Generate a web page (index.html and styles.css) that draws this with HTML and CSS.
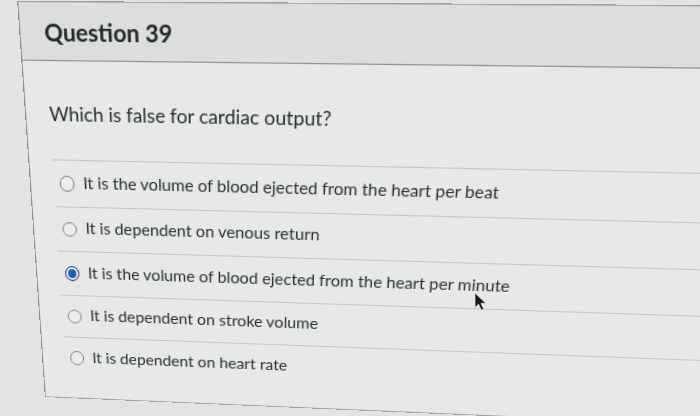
FILE: index.html
```html
<!DOCTYPE html>
<html lang="en">
<head>
<meta charset="utf-8">
<title>Question 39</title>
<link rel="stylesheet" href="styles.css">
</head>
<body>
<div class="screen">
  <section class="card">
    <header class="card-header">
      <h2 class="title">Question 39</h2>
    </header>
    <div class="card-body">
      <p class="question">Which is false for cardiac output?</p>
      <div class="answers">
        <label class="answer"><span class="radio"></span><span class="answer-text">It is the volume of blood ejected from the heart per beat</span></label>
        <label class="answer"><span class="radio"></span><span class="answer-text">It is dependent on venous return</span></label>
        <label class="answer"><span class="radio checked"></span><span class="answer-text">It is the volume of blood ejected from the heart per minute</span></label>
        <label class="answer"><span class="radio"></span><span class="answer-text">It is dependent on stroke volume</span></label>
        <label class="answer"><span class="radio"></span><span class="answer-text">It is dependent on heart rate</span></label>
      </div>
    </div>
  </section>
  <svg class="cursor" width="13" height="19" viewBox="0 0 13 19" aria-hidden="true">
    <path d="M1 1 L1 15.5 L4.6 12.2 L7.2 18 L9.6 17 L7 11.3 L11.8 11.3 Z" fill="#161819" stroke="#d8dada" stroke-width="0.8" stroke-linejoin="round"/>
  </svg>
</div>
</body>
</html>
```

FILE: styles.css
```css
html, body {
  margin: 0;
  padding: 0;
}

body {
  width: 700px;
  height: 416px;
  overflow: hidden;
  background: #e2e3e3;
  font-family: "Lato", "Liberation Sans", sans-serif;
  color: #2c3034;
}

/* the photographed screen: the card is seen at a slight angle */
.screen {
  position: relative;
  box-sizing: border-box;
  width: 700px;
  height: 416px;
  padding: 24.15px 0 0 36px;
  overflow: hidden;
}

.card {
  width: 760px;
  box-sizing: border-box;
  background: #e7e9e8;
  border-left: 1.5px solid #8c8f8f;
  border-bottom: 1.8px solid #a0a3a3;
  transform-origin: 0 245.85px;
  transform: matrix3d(1, 0.031, 0, -0.0000926,
                      0.07, 1, 0, 0.00035,
                      0, 0, 1, 0,
                      0, 0, 0, 1);
}

.card-header {
  box-sizing: border-box;
  height: 50.8px;
  padding: 11.5px 24px 11.5px 22px;
  background: #dcdede;
  border-top: 1px solid #9c9f9f;
  border-bottom: 1.8px solid #8e9191;
}

.title {
  margin: 0;
  font-size: 21.1px;
  line-height: 25px;
  font-weight: 700;
  color: #23272b;
}

.card-body {
  padding: 36.3px 24px 20.85px 22px;
}

.question {
  margin: 0 0 31.25px;
  font-size: 17.8px;
  line-height: 21px;
  color: #282c30;
}

.answers {
  display: flex;
  flex-direction: column;
}

.answer {
  box-sizing: border-box;
  height: 43.5px;
  display: flex;
  align-items: center;
  gap: 8px;
  border-top: 1.3px solid #c3c6c6;
}

.radio {
  flex: none;
  box-sizing: border-box;
  width: 14.5px;
  height: 14.5px;
  margin-left: 5.95px;
  border-radius: 50%;
  border: 1.5px solid #7d8182;
  background: #eceeed;
}

.radio.checked {
  border-color: #3c4761;
  background: #1d5bbe;
  box-shadow: inset 0 0 0 2px #f2f4f6;
}

.answer-text {
  margin-bottom: 3px;
  font-size: 15.7px;
  line-height: 19px;
  color: #2b2f33;
}

.cursor {
  position: absolute;
  left: 474px;
  top: 292px;
}
```
